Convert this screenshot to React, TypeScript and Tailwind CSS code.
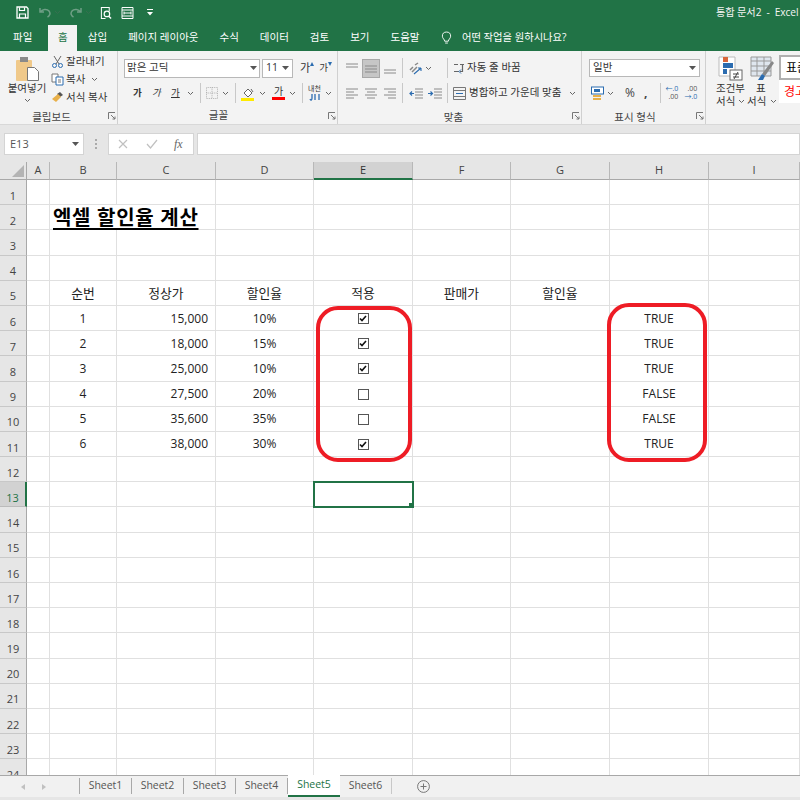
const columns = [
  { name: 'A', width: 23 },
  { name: 'B', width: 67 },
  { name: 'C', width: 99 },
  { name: 'D', width: 98 },
  { name: 'E', width: 99 },
  { name: 'F', width: 98 },
  { name: 'G', width: 99 },
  { name: 'H', width: 99 },
  { name: 'I', width: 91 },
]

const tableRows = [
  { no: '1', price: '15,000', rate: '10%', checked: true },
  { no: '2', price: '18,000', rate: '15%', checked: true },
  { no: '3', price: '25,000', rate: '10%', checked: true },
  { no: '4', price: '27,500', rate: '20%', checked: false },
  { no: '5', price: '35,600', rate: '35%', checked: false },
  { no: '6', price: '38,000', rate: '30%', checked: true },
]

const headers: Record<string, string> = { B: '순번', C: '정상가', D: '할인율', E: '적용', F: '판매가', G: '할인율' }

const Chevron = ({ className = 'ml-[5px]' }: { className?: string }) => (
  <svg width="7" height="5" viewBox="0 0 7 5" className={`shrink-0 ${className}`}>
    <path d="M1 1l2.5 2.5L6 1" fill="none" stroke="#666" strokeWidth="1" />
  </svg>
)

const Caret = () => (
  <svg width="7" height="4" viewBox="0 0 7 4">
    <path d="M0 0h7L3.5 4z" fill="#555" />
  </svg>
)

const Launcher = () => (
  <svg width="8" height="8" viewBox="0 0 8 8" className="absolute right-[1px] bottom-[4px]">
    <path d="M.5 7V.5H7M3 3l4 4M4.5 7H7V4.5" fill="none" stroke="#777" strokeWidth="1" />
  </svg>
)

const Sep = () => <div className="w-px h-[20px] bg-[#c8c8c8] shrink-0" />

const Lines = ({ kind }: { kind: 'top' | 'mid' | 'bottom' | 'left' | 'center' | 'right' }) => {
  const d = {
    top: 'M0 2h12M0 5h12',
    mid: 'M0 4h12M0 7h12M0 10h12',
    bottom: 'M0 8h12M0 11h12',
    left: 'M0 2h12M0 5h8M0 8h12M0 11h8',
    center: 'M0 2h12M2 5h8M0 8h12M2 11h8',
    right: 'M0 2h12M4 5h8M0 8h12M4 11h8',
  }[kind]
  return (
    <svg width="12" height="13" viewBox="0 0 12 13" className="shrink-0">
      <path d={d} stroke="#8a8a8a" strokeWidth="1" fill="none" />
    </svg>
  )
}

const Indent = ({ flip }: { flip?: boolean }) => (
  <svg width="14" height="13" viewBox="0 0 14 13" className="shrink-0">
    <path d="M6 2h8M6 5h8M6 8h8M6 11h8" stroke="#8a8a8a" />
    <path d={flip ? 'M0 6.500h4M2.500 4.500l2 2-2 2' : 'M5 6.500H1M3 4.500l-2 2 2 2'} stroke="#2b6cb0" fill="none" strokeWidth="1.200" />
  </svg>
)

const CheckBox = ({ checked }: { checked: boolean }) => (
  <div className="w-[11px] h-[11px] border border-[#555] bg-white flex items-center justify-center">
    {checked && (
      <svg width="8" height="7" viewBox="0 0 8 7">
        <path d="M1 3.500l2 2L7 1" fill="none" stroke="#111" strokeWidth="1.600" />
      </svg>
    )}
  </div>
)

const QuickAccess = () => (
  <div className="h-[25px] bg-[#217346] flex items-center relative pl-[16px] shrink-0">
    <svg width="13" height="13" viewBox="0 0 13 13">
      <path d="M1 1h9.500L12 2.500V12H1z" fill="none" stroke="#fff" strokeWidth="1.300" />
      <path d="M3.500 1.500v3h5v-3M3.500 12V8h6v4" fill="none" stroke="#fff" strokeWidth="1.200" />
    </svg>
    <svg width="12" height="11" viewBox="0 0 12 11" className="ml-[10px]">
      <path d="M1 1v4h4M1.500 5C3 2 8 1.500 10 4s.5 5-1.500 6" fill="none" stroke="#6f9f86" strokeWidth="1.500" />
    </svg>
    <Chevron className="ml-[3px] opacity-30" />
    <svg width="12" height="11" viewBox="0 0 12 11" className="ml-[9px]">
      <path d="M11 1v4H7M10.500 5C9 2 4 1.500 2 4s-.5 5 1.500 6" fill="none" stroke="#6f9f86" strokeWidth="1.500" />
    </svg>
    <Chevron className="ml-[3px] opacity-30" />
    <svg width="12" height="14" viewBox="0 0 13 14" className="ml-[8px]">
      <path d="M10 5V1H1.500v12H6" fill="none" stroke="#fff" strokeWidth="1.100" />
      <circle cx="7.500" cy="8" r="3" fill="none" stroke="#fff" strokeWidth="1.300" />
      <path d="M9.500 10.500l2.500 2.500" stroke="#fff" strokeWidth="1.500" />
    </svg>
    <svg width="13" height="12" viewBox="0 0 13 12" className="ml-[9px]">
      <path d="M1 .5h11v11H1zM1 3h11M1 9h11M3 6h7M3 4.500v3M10 4.500v3" fill="none" stroke="#fff" strokeWidth="1" />
    </svg>
    <svg width="6" height="7" viewBox="0 0 6 7" className="ml-[13px]">
      <path d="M0 0h6v1H0zM0 3h6L3 6.500z" fill="#fff" />
    </svg>
    <span className="absolute left-[716px] top-[5px] text-[10.200px] tracking-[-0.1px] text-[#f4f4f4] whitespace-nowrap">통합 문서2&nbsp;&nbsp;-&nbsp; Excel</span>
  </div>
)

const TabBar = () => (
  <div className="h-[26px] bg-[#217346] flex text-[10.500px] text-white pl-[2px] shrink-0">
    <div className="px-[11px] flex items-center">파일</div>
    <div className="ml-[5px] px-[7px] flex items-center bg-[#f3f3f3] text-[#217346] w-[29px] justify-center">홈</div>
    {['삽입', '페이지 레이아웃', '수식', '데이터', '검토', '보기', '도움말'].map((t) => (
      <div key={t} className="px-[10.500px] flex items-center whitespace-nowrap">{t}</div>
    ))}
    <svg width="11" height="14" viewBox="0 0 12 14" className="ml-[11px] mt-[6px]">
      <path d="M4 10.500C4 8.500 1.500 7.500 1.500 5a4.500 4.500 0 0 1 9 0c0 2.500-2.500 3.500-2.500 5.500zM4.500 12.500h3" fill="none" stroke="#fff" strokeWidth="1" />
    </svg>
    <div className="ml-[10px] flex items-center whitespace-nowrap text-[10.300px]">어떤 작업을 원하시나요?</div>
  </div>
)

const Clipboard = () => (
  <div className="w-[118px] shrink-0 relative border-r border-[#d0d0d0] flex flex-col">
    <div className="flex h-[59px]">
      <div className="w-[51px] flex flex-col items-center pt-[6px] pl-[3px]">
        <svg width="24" height="24" viewBox="0 0 24 24" className="ml-[2px]">
          <rect x="0" y="3" width="16" height="21" rx="1" fill="#f0c98a" />
          <rect x="4" y="0" width="8" height="5" fill="#8a8a8a" />
          <path d="M11.500 10.500h7l4 4v9h-11z" fill="#fff" stroke="#777" />
        </svg>
        <span className="text-[10.500px] leading-[14px] whitespace-nowrap text-[#333]">붙여넣기</span>
        <Chevron className="mt-[3px]" />
      </div>
      <div className="flex flex-col text-[10.500px] text-[#333] pt-[1px] leading-[18px] gap-0">
        <div className="flex items-center h-[18px] whitespace-nowrap">
          <svg width="13" height="13" viewBox="0 0 13 13" className="mr-[2px]">
            <path d="M3 1l5 8M10 1L5 9" stroke="#666" />
            <circle cx="3.500" cy="10.500" r="2" fill="none" stroke="#2b6cb0" />
            <circle cx="9.500" cy="10.500" r="2" fill="none" stroke="#2b6cb0" />
          </svg>
          잘라내기
        </div>
        <div className="flex items-center h-[18px] whitespace-nowrap">
          <svg width="13" height="13" viewBox="0 0 13 13" className="mr-[2px]">
            <path d="M1 1h6v8H1z" fill="#fff" stroke="#777" />
            <path d="M5 4h7v8H5z" fill="#fff" stroke="#2b6cb0" />
            <path d="M7 7h3M7 9h3" stroke="#777" />
          </svg>
          복사
          <Chevron className="ml-[6px]" />
        </div>
        <div className="flex items-center h-[18px] whitespace-nowrap">
          <svg width="13" height="13" viewBox="0 0 13 13" className="mr-[2px]">
            <path d="M6 3l3-2 3 3-3 2z" fill="#555" />
            <path d="M1 8l6-5 3 3-5 5z" fill="#e8b04a" />
          </svg>
          서식 복사
        </div>
      </div>
    </div>
    <div className="text-center text-[10.500px] text-[#444] leading-[14px] pr-[14px]">클립보드</div>
    <Launcher />
  </div>
)

const Font = () => (
  <div className="w-[220px] shrink-0 relative border-r border-[#d0d0d0] flex flex-col text-[#333] pl-[6px]">
    <div className="flex items-center h-[18px] mt-[8px]">
      <div className="w-[136px] h-[19px] bg-white border border-[#b8b8b8] flex items-center justify-between px-[2px] text-[10.500px]">
        맑은 고딕 <Caret />
      </div>
      <div className="ml-[2px] w-[31px] h-[19px] bg-white border border-[#b8b8b8] flex items-center justify-between px-[3px] text-[10.500px]">
        11 <Caret />
      </div>
      <span className="ml-[7px] text-[11px]">가</span>
      <svg width="4" height="4" viewBox="0 0 4 4" className="mb-[9px]"><path d="M0 4l2-4 2 4z" fill="#2b6cb0" /></svg>
      <span className="ml-[5px] text-[9.500px]">가</span>
      <svg width="4" height="4" viewBox="0 0 4 4" className="mb-[9px]"><path d="M0 0l2 4 2-4z" fill="#2b6cb0" /></svg>
    </div>
    <div className="flex items-center h-[20px] mt-[6px] text-[9.500px] pl-[9px]">
      <span className="font-bold w-[19px]">가</span>
      <span className="italic w-[19px]">가</span>
      <span className="underline w-[14px]">가</span>
      <Chevron className="ml-[2px] mr-[6px]" />
      <Sep />
      <svg width="12" height="12" viewBox="0 0 13 13" className="ml-[5px]">
        <path d="M.5.500h12v12H.5zM6.500.500v12M.5 6.500h12" fill="none" stroke="#aaa" strokeDasharray="1 1" />
      </svg>
      <Chevron className="ml-[4px] mr-[6px]" />
      <Sep />
      <svg width="14" height="15" viewBox="0 0 14 15" className="ml-[5px]">
        <path d="M3 7l4-4 4 4-4 4z" fill="#fff" stroke="#666" />
        <path d="M10 3l2 3" stroke="#666" />
        <rect x="0" y="12" width="13" height="3" fill="#ffeb00" />
      </svg>
      <Chevron className="ml-[4px] mr-[4px]" />
      <div className="flex flex-col items-center w-[13px] ml-[2px]">
        <span className="leading-[11px] text-[10px]">가</span>
        <div className="w-[13px] h-[3px] bg-[#ff0000]" />
      </div>
      <Chevron className="ml-[4px] mr-[6px]" />
      <Sep />
      <div className="ml-[5px] flex flex-col items-center w-[13px]">
        <span className="leading-[8px] text-[7px] whitespace-nowrap">내천</span>
        <svg width="12" height="8" viewBox="0 0 12 8">
          <path d="M1 6c1 2 2 1 2-1V1M6 1v6M10 1v6" fill="none" stroke="#2b6cb0" strokeWidth="1.300" />
        </svg>
      </div>
      <Chevron className="ml-[4px]" />
    </div>
    <div className="text-center text-[10.500px] text-[#444] leading-[14px] mt-[5px] pr-[24px]">글꼴</div>
    <Launcher />
  </div>
)

const Alignment = () => (
  <div className="w-[244px] shrink-0 relative border-r border-[#d0d0d0] flex flex-col text-[10.500px] text-[#333] pl-[8px]">
    <div className="flex items-center h-[20px] mt-[7px]">
      <Lines kind="top" />
      <div className="ml-[4px] w-[18px] h-[19px] bg-[#c6c6c6] border border-[#a8a8a8] flex items-center justify-center">
        <Lines kind="mid" />
      </div>
      <div className="ml-[4px]"><Lines kind="bottom" /></div>
      <div className="mx-[6px]"><Sep /></div>
      <svg width="14" height="13" viewBox="0 0 14 13" className="shrink-0">
        <path d="M1 8l3-3M3 10l5-5M6 3l3-2" fill="none" stroke="#888" strokeWidth="1.500" />
        <path d="M5 12l7-6M12 6H9M12 6v3" fill="none" stroke="#2b6cb0" strokeWidth="1.100" />
      </svg>
      <Chevron className="ml-[2px] mr-[15px]" />
      <Sep />
      <svg width="12" height="13" viewBox="0 0 12 13" className="ml-[5px] mr-[2px] shrink-0">
        <path d="M1 2.500h4M7 2.500h4M1 9.500h5M9.500 2.500v7H7" fill="none" stroke="#666" strokeWidth="1.200" />
        <path d="M8 7.500L6 9.500l2 2" fill="none" stroke="#2b6cb0" />
      </svg>
      <span className="whitespace-nowrap">자동 줄 바꿈</span>
    </div>
    <div className="flex items-center h-[20px] mt-[5px]">
      <Lines kind="left" />
      <div className="ml-[7px]"><Lines kind="center" /></div>
      <div className="ml-[7px]"><Lines kind="right" /></div>
      <div className="mx-[6px]"><Sep /></div>
      <Indent />
      <div className="ml-[5px]"><Indent flip /></div>
      <div className="ml-[5px]"><Sep /></div>
      <svg width="13" height="13" viewBox="0 0 13 13" className="ml-[5px] mr-[3px] shrink-0">
        <path d="M.5.500h12v12H.5zM.5 3.500h12M.5 9.500h12" fill="none" stroke="#777" />
        <path d="M3 6.500h7" stroke="#2b6cb0" />
      </svg>
      <span className="whitespace-nowrap">병합하고 가운데 맞춤</span>
      <Chevron className="ml-[8px]" />
    </div>
    <div className="text-center text-[#444] leading-[14px] mt-[7px] pr-[20px]">맞춤</div>
    <Launcher />
  </div>
)

const NumberGroup = () => (
  <div className="w-[124px] shrink-0 relative border-r border-[#d0d0d0] flex flex-col text-[10.500px] text-[#333] pl-[7px]">
    <div className="w-[111px] h-[19px] mt-[8px] bg-white border border-[#b8b8b8] flex items-center justify-between px-[3px]">
      일반 <Caret />
    </div>
    <div className="flex items-center h-[20px] mt-[6px] pl-[2px]">
      <svg width="14" height="15" viewBox="0 0 14 15">
        <rect x=".5" y="1" width="12" height="7" fill="#fff" stroke="#2b6cb0" />
        <rect x="3" y="3" width="6" height="3" fill="#2b6cb0" />
        <rect x="2" y="9" width="8" height="2" fill="#e8b04a" />
        <rect x="2" y="12" width="8" height="2" fill="#e8b04a" />
      </svg>
      <Chevron className="ml-[2px]" />
      <span className="ml-[11px] text-[12px] text-[#444]">%</span>
      <span className="ml-[9px] text-[12px] font-bold text-[#444]">,</span>
      <div className="ml-[13px]"><Sep /></div>
      <div className="ml-[5px] flex flex-col items-end text-[7px] leading-[8px] text-[#555] w-[12px]">
        <span className="text-[#2b6cb0] whitespace-nowrap">←.0</span>
        <span>.00</span>
      </div>
      <div className="ml-[7px] flex flex-col items-end text-[7px] leading-[8px] text-[#555] w-[12px]">
        <span>.00</span>
        <span className="text-[#2b6cb0] whitespace-nowrap">→.0</span>
      </div>
    </div>
    <div className="text-center text-[#444] leading-[14px] mt-[7px] pr-[24px]">표시 형식</div>
    <Launcher />
  </div>
)

const Styles = () => (
  <div className="flex-1 flex text-[10.500px] text-[#333] pl-[9px] overflow-hidden">
    <div className="w-[30px] flex flex-col items-start pl-[1px] pt-[5px] shrink-0">
      <svg width="25" height="25" viewBox="0 0 25 25" className="ml-[2px]">
        <path d="M1 1h16v19H1z" fill="#fff" stroke="#bbb" />
        <rect x="5" y="1" width="5" height="5" fill="#d9663a" />
        <rect x="5" y="7" width="10" height="5" fill="#2b6cb0" />
        <rect x="5" y="13" width="4" height="5" fill="#2b6cb0" />
        <rect x="12" y="14" width="12" height="10" fill="#fff" stroke="#666" />
        <path d="M15 18h6M15 21h6M20 16l-4 7" stroke="#444" />
      </svg>
      <span className="leading-[13px] whitespace-nowrap mt-[1px]">조건부</span>
      <span className="leading-[13px] whitespace-nowrap flex items-center">서식<Chevron className="ml-[3px]" /></span>
    </div>
    <div className="w-[32px] ml-[2px] flex flex-col items-start pt-[5px] shrink-0">
      <svg width="25" height="25" viewBox="0 0 25 25" className="ml-[3px]">
        <path d="M1 1h20v19H1z" fill="#dfe6ee" stroke="#999" />
        <path d="M1 5h20M1 10h20M1 15h20M7 1v19M14 1v19" stroke="#999" />
        <path d="M12 18l10-13 2 2-9 13z" fill="#888" />
        <path d="M8 24l4-6 3 2-2 4z" fill="#2b6cb0" />
      </svg>
      <span className="leading-[13px] whitespace-nowrap mt-[1px] ml-[9px]">표</span>
      <span className="leading-[13px] whitespace-nowrap flex items-center">서식<Chevron className="ml-[4px]" /></span>
    </div>
    <div className="flex flex-col pt-[4px] shrink-0 w-[40px]">
      <div className="h-[25px] bg-white border-2 border-[#b0b0b0] text-[12px] text-black flex items-center pl-[5px]">표준</div>
      <div className="h-[23px] bg-white text-[12px] text-[#ff0000] flex items-center pl-[5px]">경고</div>
    </div>
  </div>
)

const FormulaBar = () => (
  <div className="h-[37px] bg-[#e6e6e6] flex items-center pl-[4px] gap-0 text-[#555] shrink-0 pt-[1px]">
    <div className="w-[80px] h-[22px] bg-white border border-[#d4d4d4] flex items-center justify-between pl-[5px] pr-[4px] text-[11px]">
      E13 <Caret />
    </div>
    <div className="w-[24px] flex flex-col items-center gap-[2px]">
      <div className="w-[2px] h-[2px] bg-[#aaa]" />
      <div className="w-[2px] h-[2px] bg-[#aaa]" />
      <div className="w-[2px] h-[2px] bg-[#aaa]" />
    </div>
    <div className="w-[86px] h-[22px] bg-white border border-[#d4d4d4] flex items-center pl-[9px]">
      <svg width="10" height="10" viewBox="0 0 10 10">
        <path d="M1 1l8 8M9 1L1 9" stroke="#c0c0c0" strokeWidth="1.200" />
      </svg>
      <svg width="12" height="10" viewBox="0 0 12 10" className="ml-[18px]">
        <path d="M1 5l3.500 4L11 1" fill="none" stroke="#c0c0c0" strokeWidth="1.200" />
      </svg>
      <span className="ml-[16px] italic text-[12px] font-['Liberation_Serif',serif] text-[#666]">fx</span>
    </div>
    <div className="flex-1 ml-[3px] h-[22px] bg-white border border-[#d4d4d4]" />
  </div>
)

const Sheet = () => (
  <div className="relative flex-1 overflow-hidden bg-white">
    <div className="grid grid-cols-[26px_23px_67px_99px_98px_99px_98px_99px_99px_91px] grid-rows-[18px] auto-rows-[25.2px] text-[12px] text-[#222] pl-px">
      <div className="-ml-px bg-[#e6e6e6] border-r border-b border-[#a8a8a8] flex items-end justify-end p-[2px]">
        <svg width="12" height="12" viewBox="0 0 12 12"><path d="M12 0v12H0z" fill="#b4b4b4" /></svg>
      </div>
      {columns.map((c) => (
        <div
          key={c.name}
          className={
            c.name === 'E'
              ? 'bg-[#d2d2d2] border-b-2 border-[#217346] border-r border-r-[#b8b8b8] flex items-center justify-center text-[11px] text-[#333]'
              : 'bg-[#e6e6e6] border-b border-[#a8a8a8] border-r border-r-[#b8b8b8] flex items-center justify-center text-[11px] text-[#444]'
          }
        >
          {c.name}
        </div>
      ))}
      {Array.from({ length: 24 }, (_, i) => i + 1).map((row) => {
        const item = row >= 6 && row <= 11 ? tableRows[row - 6] : null
        return [
          <div
            key={`h${row}`}
            className={
              row === 13
                ? '-ml-px bg-[#d2d2d2] border-r-2 border-r-[#217346] border-b border-b-[#bbb] flex items-end justify-center text-[11px] text-[#217346]'
                : '-ml-px bg-[#e6e6e6] border-r border-r-[#a8a8a8] border-b border-b-[#c8c8c8] flex items-end justify-center text-[11px] text-[#444]'
            }
          >
            {row}
          </div>,
          ...columns.map((c) => {
            const selected = row === 13 && c.name === 'E'
            let content: React.ReactNode = null
            let align = 'justify-center'
            if (row === 5) content = <span className="text-[12.800px]">{headers[c.name]}</span>
            if (item) {
              if (c.name === 'B') content = item.no
              if (c.name === 'C') {
                content = item.price
                align = 'justify-end pr-[7px]'
              }
              if (c.name === 'D') content = item.rate
              if (c.name === 'E') content = <CheckBox checked={item.checked} />
              if (c.name === 'H') content = item.checked ? 'TRUE' : 'FALSE'
            }
            if (row === 2 && c.name === 'B') {
              return (
                <div key={c.name + row} className="border-b border-[#e0e0e0] flex items-center pl-[3px] pt-[1px] whitespace-nowrap text-[20px] tracking-[0.7px] font-bold text-black underline decoration-2 underline-offset-[3px] z-[1]">
                  엑셀 할인율 계산
                </div>
              )
            }
            return (
              <div
                key={c.name + row}
                className={`border-r border-b border-[#e0e0e0] flex items-center pt-[1px] ${align} ${selected ? 'relative outline-2 -outline-offset-1 outline-[#217346]' : ''}`}
              >
                {content}
                {selected && <div className="absolute z-10 -right-[2px] -bottom-[2px] w-[5px] h-[5px] bg-[#217346]" />}
              </div>
            )
          }),
        ]
      })}
    </div>
    {/* red annotation boxes drawn over the sheet */}
    <div className="absolute left-[316px] top-[144px] w-[96px] h-[156px] border-[4px] border-[#ee1c25] rounded-[22px]" />
    <div className="absolute left-[607px] top-[141px] w-[100px] h-[159px] border-[4px] border-[#ee1c25] rounded-[22px]" />
  </div>
)

const SheetTabs = () => (
  <div className="h-[25px] shrink-0 flex flex-col">
    <div className="h-[22px] bg-[#f1f1f1] border-t border-[#a8a8a8] flex text-[10.500px] text-[#555] leading-[19px]">
      <div className="w-[79px] flex items-center gap-[17px] pl-[21px]">
        <svg width="4" height="6" viewBox="0 0 4 6"><path d="M4 0v6L0 3z" fill="#c0c0c0" /></svg>
        <svg width="4" height="6" viewBox="0 0 4 6"><path d="M0 0v6l4-3z" fill="#c0c0c0" /></svg>
      </div>
      <div className="w-px h-[16px] mt-[2px] bg-[#a8a8a8]" />
      {['Sheet1', 'Sheet2', 'Sheet3', 'Sheet4'].map((s) => (
        <div key={s} className="flex">
          <div className="w-[51px] text-center">{s}</div>
          <div className="w-px h-[16px] mt-[2px] bg-[#a8a8a8]" />
        </div>
      ))}
      <div className="w-[52px] -mt-px bg-white border-b-2 border-[#217346] text-center text-[#217346]">Sheet5</div>
      <div className="w-[51px] text-center">Sheet6</div>
      <div className="w-px h-[16px] mt-[2px] bg-[#c8c8c8]" />
      <svg width="13" height="13" viewBox="0 0 13 13" className="ml-[25px] mt-[4px]">
        <circle cx="6.500" cy="6.500" r="5.900" fill="none" stroke="#777" />
        <path d="M6.500 3.500v6M3.500 6.500h6" stroke="#777" />
      </svg>
    </div>
    <div className="h-[3px] bg-[#e6e6e6]" />
  </div>
)

export default function App() {
  return (
    <div className="w-[800px] h-[800px] overflow-hidden flex flex-col bg-[#f3f3f3] font-['Open_Sans','Noto_Sans_CJK_KR',sans-serif]">
      <QuickAccess />
      <TabBar />
      <div className="h-[74px] shrink-0 bg-[#f3f3f3] flex border-b border-[#d8d8d8]">
        <Clipboard />
        <Font />
        <Alignment />
        <NumberGroup />
        <Styles />
      </div>
      <FormulaBar />
      <Sheet />
      <SheetTabs />
    </div>
  )
}
